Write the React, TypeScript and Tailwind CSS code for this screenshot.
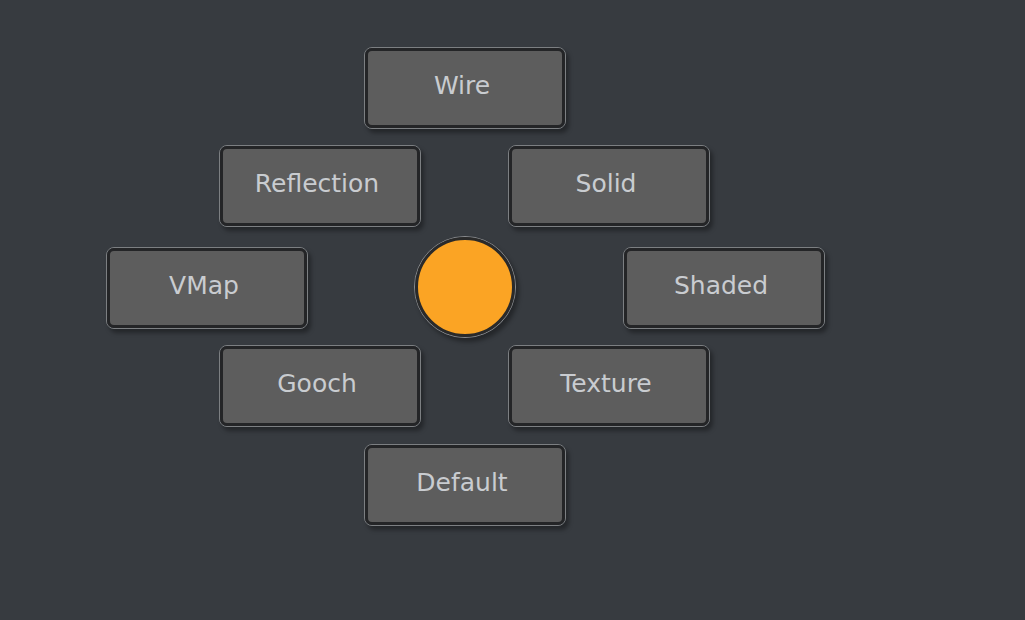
import React from "react";

type Item = { label: string; x: number; y: number };

const items: Item[] = [
  { label: "Wire", x: 364, y: 47 },
  { label: "Reflection", x: 219, y: 145 },
  { label: "Solid", x: 508, y: 145 },
  { label: "VMap", x: 106, y: 247 },
  { label: "Shaded", x: 623, y: 247 },
  { label: "Gooch", x: 219, y: 345 },
  { label: "Texture", x: 508, y: 345 },
  { label: "Default", x: 364, y: 444 },
];

function PieButton({ label, x, y }: Item) {
  return (
    <div
      className="absolute w-[202px] h-[82px] rounded-[8px] border border-[#7c7f82] shadow-[3px_4px_4px_rgba(0,0,0,0.35)]"
      style={{ left: x, top: y }}
    >
      <div className="w-full h-full rounded-[7px] border-[3px] border-[#242527] bg-[#5d5d5d] flex items-center justify-center pb-[5px] pr-[6px]">
        <span
          className="text-[25px] text-[#c9ccd0] leading-none"
          style={{ fontFamily: '"DejaVu Sans", Verdana, sans-serif' }}
        >
          {label}
        </span>
      </div>
    </div>
  );
}

export default function App() {
  return (
    <div className="relative w-[1025px] h-[620px] bg-[#373b40] overflow-hidden">
      {items.map((it) => (
        <PieButton key={it.label} {...it} />
      ))}
      <div className="absolute left-[414px] top-[236px] w-[102px] h-[102px] rounded-full border border-[#8a8c8f] shadow-[3px_4px_4px_rgba(0,0,0,0.35)]">
        <div className="w-full h-full rounded-full border-[3px] border-[#2a2a2a] bg-[#fba424]" />
      </div>
    </div>
  );
}
